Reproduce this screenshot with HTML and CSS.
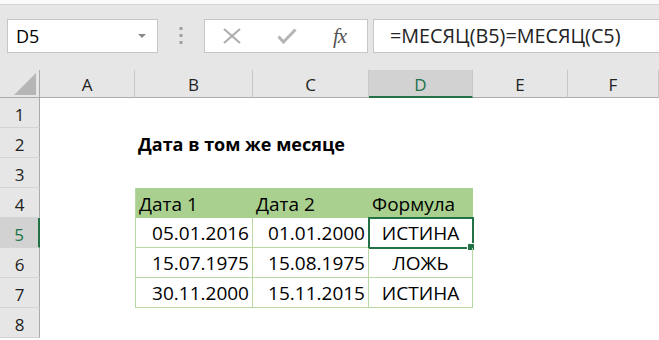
FILE: index.html
```html
<!DOCTYPE html>
<html lang="ru">
<head>
  <meta charset="UTF-8">
  <meta name="viewport" content="width=device-width, initial-scale=1.0">
  <title>МЕСЯЦ</title>
  <link rel="stylesheet" href="styles.css">
</head>
<body>
  <div class="top-strip"></div>

  <div class="toolbar">
    <div class="namebox">
      <span>D5</span>
      <svg class="arrow" width="8" height="5" viewBox="0 0 8 5"><path d="M0 0h8L4 4z" fill="#8a8a8a"/></svg>
    </div>
    <div class="grip">
      <svg width="4" height="18" viewBox="0 0 4 18">
        <rect x="0.5" y="0" width="3" height="3" fill="#a0a0a0"/>
        <rect x="0.5" y="7" width="3" height="3" fill="#a0a0a0"/>
        <rect x="0.5" y="14" width="3" height="3" fill="#a0a0a0"/>
      </svg>
    </div>
    <div class="fbuttons">
      <svg width="18" height="16" viewBox="0 0 18 16"><path d="M1 1L17 15M17 1L1 15" stroke="#ababab" stroke-width="2" fill="none"/></svg>
      <svg width="20" height="16" viewBox="0 0 20 16"><path d="M1.5 8.5L6.5 14L18.5 1.5" stroke="#b5b5b5" stroke-width="3" fill="none"/></svg>
      <span class="fx">fx</span>
    </div>
    <div class="formula">=МЕСЯЦ(B5)=МЕСЯЦ(C5)</div>
  </div>

  <div class="sheet">
    <div class="corner"><svg width="22" height="22" viewBox="0 0 22 22"><path d="M22 0V22H0z" fill="#b6b6b6"/></svg></div>
    <div class="ch">A</div>
    <div class="ch">B</div>
    <div class="ch">C</div>
    <div class="ch active">D</div>
    <div class="ch">E</div>
    <div class="ch">F</div>

    <div class="rh">1</div>
    <div class="c"></div><div class="c"></div><div class="c"></div><div class="c"></div><div class="c"></div><div class="c"></div>

    <div class="rh">2</div>
    <div class="c"></div>
    <div class="c title">Дата в том же месяце</div>
    <div class="c"></div><div class="c"></div><div class="c"></div><div class="c"></div>

    <div class="rh">3</div>
    <div class="c"></div><div class="c"></div><div class="c"></div><div class="c"></div><div class="c"></div><div class="c"></div>

    <div class="rh">4</div>
    <div class="c"></div>
    <div class="c head first">Дата 1</div>
    <div class="c head">Дата 2</div>
    <div class="c head">Формула</div>
    <div class="c"></div><div class="c"></div>

    <div class="rh active">5</div>
    <div class="c"></div>
    <div class="c data first num">05.01.2016</div>
    <div class="c data num">01.01.2000</div>
    <div class="c data mid selected">ИСТИНА</div>
    <div class="c"></div><div class="c"></div>

    <div class="rh">6</div>
    <div class="c"></div>
    <div class="c data first num">15.07.1975</div>
    <div class="c data num">15.08.1975</div>
    <div class="c data mid">ЛОЖЬ</div>
    <div class="c"></div><div class="c"></div>

    <div class="rh">7</div>
    <div class="c"></div>
    <div class="c data first num">30.11.2000</div>
    <div class="c data num">15.11.2015</div>
    <div class="c data mid">ИСТИНА</div>
    <div class="c"></div><div class="c"></div>

    <div class="rh">8</div>
    <div class="c"></div><div class="c"></div><div class="c"></div><div class="c"></div><div class="c"></div><div class="c"></div>
  </div>
</body>
</html>
```

FILE: styles.css
```css
* {
  box-sizing: border-box;
}

body {
  margin: 0;
  width: 659px;
  height: 340px;
  overflow: hidden;
  background-color: white;
  font-family: "Open Sans", "Noto Sans", sans-serif;
  color: #000;
}

.top-strip {
  height: 5px;
  background-color: #fafafa;
  border-bottom: 1px solid #d6d6d6;
}

.toolbar {
  background-color: #e6e6e6;
  height: 65px;
  display: flex;
  align-items: flex-start;
  padding: 14px 0 0 7px;
}

.namebox {
  width: 151px;
  height: 34px;
  background-color: white;
  border: 1px solid #c6c6c6;
  display: flex;
  align-items: center;
  justify-content: space-between;
  padding: 0 11px 0 8px;
  font-size: 18px;
}

.namebox .arrow {
  margin-top: 1px;
}

.grip {
  width: 46px;
  height: 34px;
  display: flex;
  align-items: center;
  justify-content: center;
}

.fbuttons {
  width: 164px;
  height: 34px;
  background-color: white;
  border: 1px solid #c6c6c6;
  display: flex;
  align-items: center;
  padding-left: 18px;
  gap: 36px;
}

.fx {
  font-family: "Liberation Serif", serif;
  font-style: italic;
  font-size: 21px;
  color: #555;
  letter-spacing: -1px;
}

.formula {
  flex: 1;
  height: 34px;
  margin-left: 5px;
  background-color: white;
  border: 1px solid #c6c6c6;
  border-right: none;
  font-size: 19.8px;
  line-height: 32px;
  padding-left: 16px;
  color: #222;
}

.sheet {
  display: grid;
  grid-template-columns: 40px 95px 118px 116px 104px 95px 91px;
  grid-template-rows: 28px;
  grid-auto-rows: 30px;
}

.corner {
  background-color: #e6e6e6;
  border-right: 1px solid #ababab;
  border-bottom: 1px solid #ababab;
  display: flex;
  align-items: flex-end;
  justify-content: flex-end;
  padding: 0 3px 2px 0;
}

.ch {
  background-color: #e6e6e6;
  border-right: 1px solid #c8c8c8;
  border-bottom: 1px solid #ababab;
  font-size: 17px;
  color: #222;
  display: flex;
  align-items: flex-end;
  justify-content: center;
  padding-bottom: 4px;
  line-height: 1;
}

.ch.active {
  background-color: #d2d2d2;
  color: #217346;
  border-bottom: 2px solid #217346;
  padding-bottom: 3px;
}

.rh {
  background-color: #e6e6e6;
  border-right: 1px solid #ababab;
  border-bottom: 1px solid #d4d4d4;
  font-size: 17px;
  color: #222;
  display: flex;
  align-items: flex-end;
  justify-content: center;
  padding-bottom: 4px;
  line-height: 1;
}

.rh.active {
  background-color: #d2d2d2;
  color: #217346;
  border-right: 2px solid #217346;
}

.c {
  display: flex;
  align-items: flex-end;
  font-size: 19px;
  line-height: 1;
  padding: 0 3px 4px;
  white-space: nowrap;
  position: relative;
}

.title {
  font-weight: bold;
  font-size: 18px;
  padding-bottom: 5px;
}

.head {
  background-color: #a9d08e;
}

.data {
  border-right: 1px solid #b9d8a4;
  border-bottom: 1px solid #b9d8a4;
}

.data.first,
.head.first {
  border-left: 1px solid #b9d8a4;
}

.num {
  justify-content: flex-end;
}

.mid {
  justify-content: center;
}

.selected {
  outline: 2px solid #217346;
  outline-offset: -1px;
}

.selected::after {
  content: "";
  position: absolute;
  right: -3px;
  bottom: -4px;
  width: 6px;
  height: 6px;
  background-color: #217346;
  border: 1px solid white;
}
```
